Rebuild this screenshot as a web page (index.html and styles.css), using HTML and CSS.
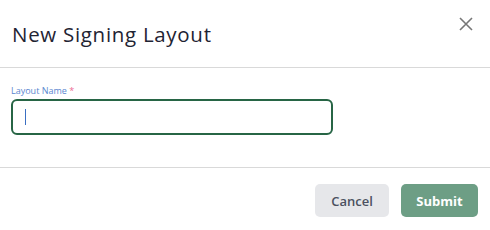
FILE: index.html
```html
<!DOCTYPE html>
<html>
<head>
<meta charset="utf-8">
<link rel="stylesheet" href="styles.css">
</head>
<body>
<div class="modal">
  <div class="header">
    <h1 class="title">New Signing Layout</h1>
    <button class="close" aria-label="Close">
      <svg width="14" height="14" viewBox="0 0 14 14"><path d="M1 1L13 13M13 1L1 13" stroke="#777" stroke-width="1.6" fill="none"/></svg>
    </button>
  </div>
  <div class="body">
    <label class="label">Layout Name <span class="req">*</span></label>
    <div class="input"><span class="caret"></span></div>
  </div>
  <div class="footer">
    <button class="btn cancel">Cancel</button>
    <button class="btn submit">Submit</button>
  </div>
</div>
</body>
</html>
```
FILE: styles.css
```css
html, body { margin: 0; padding: 0; background: #fff; }
body { font-family: "Open Sans", "Noto Sans", sans-serif; width: 490px; height: 230px; overflow: hidden; }
.modal { display: flex; flex-direction: column; }
.header {
  height: 68px; box-sizing: border-box; border-bottom: 1px solid #d9d9d9;
  display: flex; justify-content: space-between; align-items: flex-start;
  padding: 0 17px 0 12px;
}
.title { margin: 0; padding-top: 21px; font-size: 20.5px; font-weight: 400; color: #1f2433; line-height: 26px; letter-spacing: 0.7px; }
.close { border: 0; background: none; padding: 0; margin-top: 17px; width: 14px; height: 14px; display: flex; }
.body { padding: 17px 12px 0 11px; height: 100px; box-sizing: border-box; border-bottom: 1px solid #d9d9d9; }
.label { display: block; font-size: 9px; line-height: 11px; color: #5a86cf; margin-bottom: 3px; }
.req { color: #ec6a93; }
.input {
  width: 322px; height: 36px; box-sizing: border-box; border: 2px solid #276545; border-radius: 6px;
  display: flex; align-items: center; padding-left: 12px;
}
.caret { width: 1px; height: 16px; background: #3a6fc2; }
.footer { display: flex; justify-content: flex-end; gap: 12px; padding: 16px 12px 0 0; }
.btn {
  border: 0; border-radius: 5px; height: 33px; font-family: inherit; font-size: 13px; padding: 0;
}
.cancel { width: 74px; background: #e6e7ea; color: #4b5160; font-weight: 600; }
.submit { width: 77px; background: #6d9e85; color: #fff; font-weight: 700; }
```
